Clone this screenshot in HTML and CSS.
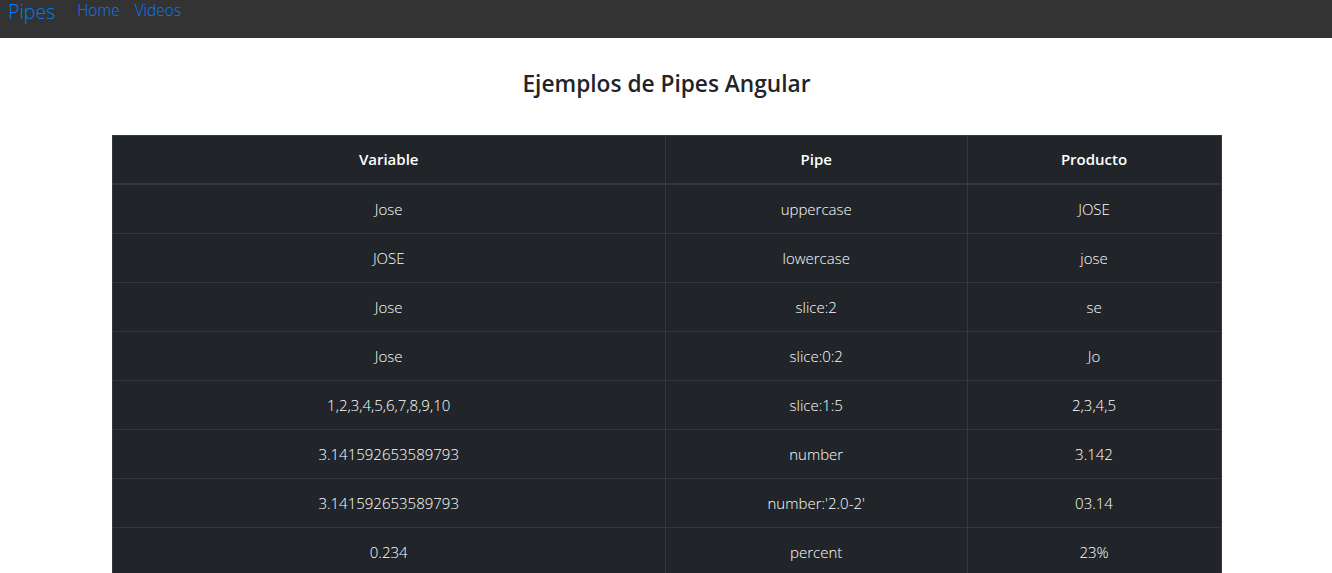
FILE: index.html
```html
<!DOCTYPE html>
<html lang="es">
<head>
  <meta charset="UTF-8" />
  <meta name="viewport" content="width=device-width, initial-scale=1" />
  <title>Pipes</title>
  <link rel="stylesheet" href="styles.css">
</head>
<body>
  <nav class="navbar">
    <a class="brand" href="#">Pipes</a>
    <a class="nav-link" href="#">Home</a>
    <a class="nav-link" href="#">Videos</a>
  </nav>

  <main class="container">
    <h3 class="title">Ejemplos de Pipes Angular</h3>

    <table class="table">
      <colgroup>
        <col class="col-var">
        <col class="col-pipe">
        <col class="col-prod">
      </colgroup>
      <thead>
        <tr>
          <th>Variable</th>
          <th>Pipe</th>
          <th>Producto</th>
        </tr>
      </thead>
      <tbody>
        <tr><td>Jose</td><td>uppercase</td><td>JOSE</td></tr>
        <tr><td>JOSE</td><td>lowercase</td><td>jose</td></tr>
        <tr><td>Jose</td><td>slice:2</td><td>se</td></tr>
        <tr><td>Jose</td><td>slice:0:2</td><td>Jo</td></tr>
        <tr><td>1,2,3,4,5,6,7,8,9,10</td><td>slice:1:5</td><td>2,3,4,5</td></tr>
        <tr><td>3.141592653589793</td><td>number</td><td>3.142</td></tr>
        <tr><td>3.141592653589793</td><td>number:'2.0-2'</td><td>03.14</td></tr>
        <tr><td>0.234</td><td>percent</td><td>23%</td></tr>
      </tbody>
    </table>
  </main>
</body>
</html>
```

FILE: styles.css
```css
body {
  margin: 0;
  font-family: "Open Sans", "Noto Sans", sans-serif;
  font-weight: 300;
  font-size: 15px;
  line-height: 1.5;
  color: #212529;
  background-color: #fff;
}

a { text-decoration: none; }

/* ---------- navbar ---------- */
.navbar {
  display: flex;
  align-items: flex-start;
  height: 38px;
  padding: 0 8px;
  background-color: #333;
}
.brand {
  color: #007bff;
  font-size: 19.5px;
  line-height: 24px;
  margin-right: 22px;
}
.nav-link {
  color: #007bff;
  font-size: 15.5px;
  line-height: 20px;
  margin-right: 15px;
}

/* ---------- content ---------- */
.container {
  max-width: 1110px;
  margin: 0 auto;
  padding: 0 15px 0 16px;
}

.title {
  margin: 0;
  padding: 28px 0 33px;
  text-align: center;
  font-size: 22.7px;
  font-weight: 600;
  line-height: 36px;
}

.table {
  width: 100%;
  border-collapse: collapse;
  background-color: #212529;
  color: #fff;
  text-align: center;
}
.col-var  { width: 49.9%; }
.col-pipe { width: 27.2%; }
.col-prod { width: 22.9%; }

.table th,
.table td {
  padding: 12px;
  line-height: 24px;
  border: 1px solid #32383e;
}
.table th {
  padding-top: 11px;
  font-weight: 600;
  font-size: 15px;
  border-bottom-width: 2px;
}
```
